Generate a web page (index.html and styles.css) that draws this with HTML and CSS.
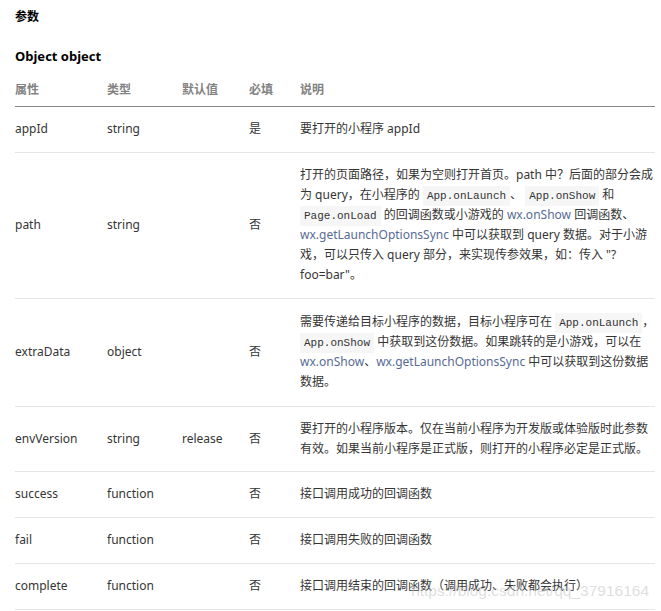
FILE: index.html
```html
<!DOCTYPE html>
<html lang="zh-CN">
<head>
<meta charset="utf-8">
<title>参数</title>
<link rel="stylesheet" href="styles.css">
</head>
<body>
<div class="doc">
  <h3 class="title">参数</h3>
  <h4 class="subtitle">Object object</h4>
  <table class="params">
    <colgroup>
      <col class="c-name"><col class="c-type"><col class="c-def"><col class="c-req"><col class="c-desc">
    </colgroup>
    <thead>
      <tr><th>属性</th><th>类型</th><th>默认值</th><th>必填</th><th>说明</th></tr>
    </thead>
    <tbody>
      <tr><td>appId</td><td>string</td><td></td><td>是</td><td class="desc">要打开的小程序 appId</td></tr>
      <tr><td>path</td><td>string</td><td></td><td>否</td><td class="desc">打开的页面路径，如果为空则打开首页。path 中？后面的部分会成<br>为 query，在小程序的 <code>App.onLaunch</code>、 <code>App.onShow</code> 和<br><code>Page.onLoad</code> 的回调函数或小游戏的 <a>wx.onShow</a> 回调函数、<br><a>wx.getLaunchOptionsSync</a> 中可以获取到 query 数据。对于小游<br>戏，可以只传入 query 部分，来实现传参效果，如：传入 "?<br>foo=bar"。</td></tr>
      <tr><td>extraData</td><td>object</td><td></td><td>否</td><td class="desc tall">需要传递给目标小程序的数据，目标小程序可在 <code>App.onLaunch</code>，<br><code>App.onShow</code> 中获取到这份数据。如果跳转的是小游戏，可以在<br><a>wx.onShow</a>、<a>wx.getLaunchOptionsSync</a> 中可以获取到这份数据<br>数据。</td></tr>
      <tr><td>envVersion</td><td>string</td><td>release</td><td>否</td><td class="desc short">要打开的小程序版本。仅在当前小程序为开发版或体验版时此参数<br>有效。如果当前小程序是正式版，则打开的小程序必定是正式版。</td></tr>
      <tr><td>success</td><td>function</td><td></td><td>否</td><td class="desc">接口调用成功的回调函数</td></tr>
      <tr><td>fail</td><td>function</td><td></td><td>否</td><td class="desc">接口调用失败的回调函数</td></tr>
      <tr><td>complete</td><td>function</td><td></td><td>否</td><td class="desc">接口调用结束的回调函数（调用成功、失败都会执行）</td></tr>
    </tbody>
  </table>
  <div class="watermark">https://blog.csdn.net/qq_37916164</div>
</div>
</body>
</html>
```
FILE: styles.css
```css
html, body {
  margin: 0;
  padding: 0;
  background: #fff;
}
.doc {
  position: relative;
  width: 640px;
  padding: 7px 0 0 15px;
  font-family: "Noto Sans", "Noto Sans CJK SC", sans-serif;
  font-size: 12px;
  color: #353535;
}
.title {
  margin: 0;
  font-size: 12px;
  line-height: 20px;
  font-weight: bold;
  color: #000;
}
.subtitle {
  margin: 19px 0 0;
  font-size: 13px;
  line-height: 20px;
  font-weight: bold;
  color: #000;
}
.params {
  margin-top: 6px;
  width: 640px;
  border-collapse: collapse;
  table-layout: fixed;
}
.c-name { width: 92px; }
.c-type { width: 75px; }
.c-def { width: 67px; }
.c-req { width: 51px; }
.params th {
  text-align: left;
  font-weight: bold;
  color: #828282;
  padding: 8px 0 6px;
  line-height: 20px;
  border-bottom: 1px solid #8a8a8a;
}
.params td {
  padding: 12px 0 13px;
  line-height: 20px;
  vertical-align: middle;
  border-bottom: 1px solid #e5e5e5;
}
.params td.tall {
  padding: 13px 0 14px;
}
.params td.short {
  padding: 12px 0 12px;
}
.desc {
  white-space: nowrap;
}
.desc code {
  font-family: "Liberation Mono", monospace;
  font-size: 11px;
  line-height: 14px;
  padding: 4px 4px;
  background: #f6f6f6;
  color: #333;
}
.desc a {
  color: #576b95;
}
.watermark {
  position: absolute;
  right: 6px;
  top: 582px;
  font-family: "Liberation Sans", sans-serif;
  font-size: 15.5px;
  color: rgba(190, 190, 190, 0.5);
  white-space: nowrap;
  pointer-events: none;
}
```
